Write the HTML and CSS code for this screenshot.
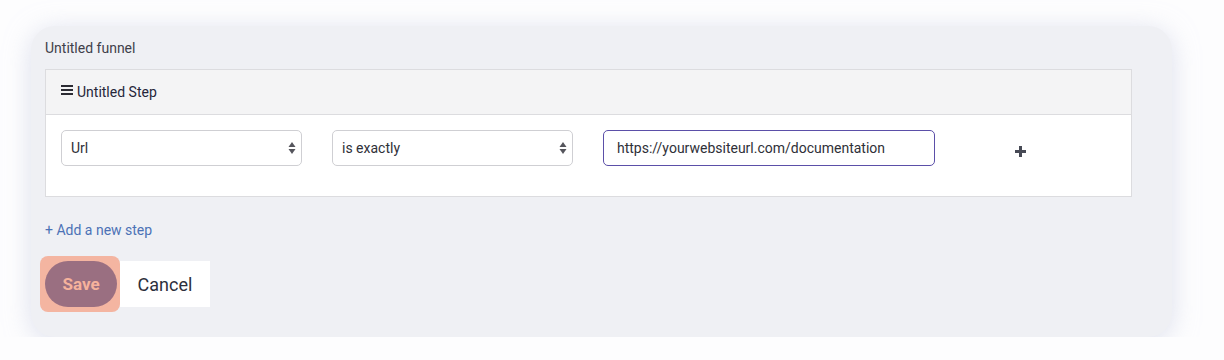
FILE: index.html
```html
<!DOCTYPE html>
<html lang="en">
<head>
  <meta charset="UTF-8" />
  <title>Funnel editor</title>
  <link rel="stylesheet" href="styles.css">
</head>
<body>

  <div class="card">
    <div class="funnel-title">Untitled funnel</div>

    <div class="step">
      <div class="step-head">
        <svg class="drag" width="12" height="10" viewBox="0 0 12 10">
          <rect x="0" y="0" width="12" height="2" fill="#2b2b33" />
          <rect x="0" y="4" width="12" height="2" fill="#2b2b33" />
          <rect x="0" y="8" width="12" height="2" fill="#2b2b33" />
        </svg>
        <span>Untitled Step</span>
      </div>

      <div class="step-body">
        <div class="select">
          <span>Url</span>
          <svg width="8" height="14" viewBox="0 0 8 14">
            <path d="M4 1 L7.5 6 L0.5 6 Z" fill="#55555c" />
            <path d="M4 13 L7.5 8 L0.5 8 Z" fill="#55555c" />
          </svg>
        </div>
        <div class="select">
          <span>is exactly</span>
          <svg width="8" height="14" viewBox="0 0 8 14">
            <path d="M4 1 L7.5 6 L0.5 6 Z" fill="#55555c" />
            <path d="M4 13 L7.5 8 L0.5 8 Z" fill="#55555c" />
          </svg>
        </div>
        <input class="url-input" type="text" value="https://yourwebsiteurl.com/documentation" />
        <div class="add-rule">
          <svg width="11" height="11" viewBox="0 0 11 11">
            <rect x="4" y="0" width="3" height="11" fill="#474a55" />
            <rect x="0" y="4" width="11" height="3" fill="#474a55" />
          </svg>
        </div>
      </div>
    </div>

    <a class="add-step" href="#">+ Add a new step</a>

    <div class="actions">
      <div class="save-focus">
        <button class="save-btn">Save</button>
      </div>
      <button class="cancel-btn">Cancel</button>
    </div>
  </div>

</body>
</html>
```

FILE: styles.css
```css
body {
  margin: 0;
  font-family: Roboto, "Liberation Sans", Arial, sans-serif;
  background: #fdfdfe;
  padding: 26px 0 0 31px;
}

.card {
  width: 1141px;
  height: 311px;
  box-sizing: border-box;
  background: #eff0f4;
  border-radius: 24px;
  box-shadow: 0 4px 26px rgba(200, 205, 225, 0.6);
  padding: 12px 40px 0 14px;
}

.funnel-title {
  font-size: 14px;
  color: #3f404a;
  line-height: 20px;
  margin-bottom: 11px;
}

.step {
  border: 1px solid #dcdcdf;
  background: #fff;
}

.step-head {
  display: flex;
  align-items: center;
  height: 44px;
  padding: 0 15px;
  background: #f4f4f5;
  border-bottom: 1px solid #dcdcdf;
  font-size: 14px;
  color: #26263a;
}

.step-head .drag {
  margin-right: 4px;
  margin-top: -4px;
}

.step-body {
  display: flex;
  align-items: center;
  padding: 15px 15px 30px;
}

.select {
  display: flex;
  align-items: center;
  justify-content: space-between;
  box-sizing: border-box;
  width: 241px;
  height: 36px;
  padding: 0 5px 0 9px;
  margin-right: 30px;
  border: 1px solid #cfcfd3;
  border-radius: 5px;
  background: #fff;
  font-size: 14px;
  color: #2f3038;
}

.url-input {
  box-sizing: border-box;
  width: 332px;
  height: 36px;
  padding: 0 13px;
  border: 1px solid #5b4fa8;
  border-radius: 5px;
  font-family: inherit;
  font-size: 14px;
  color: #2f3038;
  outline: none;
}

.add-rule {
  margin-left: 80px;
  margin-top: 6px;
  display: flex;
}

.add-step {
  display: inline-block;
  margin-top: 25px;
  font-size: 14px;
  color: #4c72b6;
  text-decoration: none;
}

.actions {
  display: flex;
  align-items: center;
  margin-top: 17px;
  margin-left: -5px;
}

.save-focus {
  background: #f4b5a1;
  border-radius: 8px;
  padding: 5px 3px 5px 5px;
  display: flex;
}

.save-btn {
  width: 72px;
  height: 46px;
  border: none;
  border-radius: 23px;
  background: #9a6f81;
  color: #f6b29c;
  font-family: inherit;
  font-size: 17px;
  font-weight: bold;
}

.cancel-btn {
  width: 90px;
  height: 46px;
  border: none;
  background: #fff;
  color: #2c2f3c;
  font-family: inherit;
  font-size: 18px;
}
```
